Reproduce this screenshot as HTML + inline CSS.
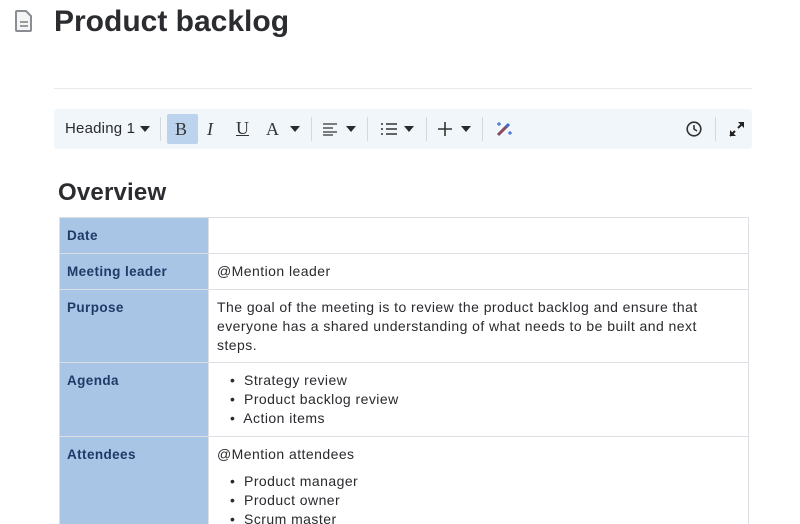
<!DOCTYPE html>
<html><head><meta charset="utf-8"><style>
*{box-sizing:border-box;margin:0;padding:0}
html,body{width:800px;height:524px;overflow:hidden}
body{background:#fff;font-family:"Liberation Sans",sans-serif;color:#292a2e;position:relative}
.a{position:absolute;white-space:nowrap}
.t{font-size:14px;line-height:19px;color:#292a2e;letter-spacing:0.45px}
.lbl{font-size:13.5px;font-weight:bold;color:#1e3a66;letter-spacing:0.4px}
.sep{position:absolute;top:117px;width:1px;height:24px;background:#d5d9de}
.cell{position:absolute;border:1px solid #dcdfe4}
</style></head><body>
<svg class="a" style="left:14px;top:9px" width="20" height="24" viewBox="0 0 20 24"><path d="M3 2h9l5 5v14a1 1 0 0 1-1 1H3a1 1 0 0 1-1-1V3a1 1 0 0 1 1-1z" fill="#f4f4f5" stroke="#8a8d93" stroke-width="2"/><path d="M6 13h8M6 17h8" stroke="#8a8d93" stroke-width="1.8"/></svg>
<div class="a" style="left:54px;top:4px;font-size:30px;font-weight:bold;line-height:36px;color:#2b2c30">Product backlog</div>
<div class="a" style="left:54px;top:88px;width:698px;height:1px;background:#e8eaed"></div>
<div class="a" style="left:54px;top:109px;width:698px;height:40px;background:#f1f6fb;border-radius:3px"></div>
<div class="a" style="left:65px;top:120px;font-size:15px;color:#292a2e;letter-spacing:0.2px">Heading 1</div>
<svg class="a" style="left:140px;top:126px" width="10" height="6"><path d="M0 0h10L5 6z" fill="#292a2e"/></svg>
<div class="sep" style="left:160px"></div>
<div class="a" style="left:167px;top:114px;width:31px;height:30px;background:#bcd3ee;border-radius:2px"></div>
<div class="a" style="left:175px;top:119px;font-family:'Liberation Serif',serif;font-size:18px;color:#333">B</div>
<div class="a" style="left:207px;top:119px;font-family:'Liberation Serif',serif;font-size:18px;font-style:italic;color:#333">I</div>
<div class="a" style="left:236px;top:118px;font-family:'Liberation Serif',serif;font-size:18px;text-decoration:underline;color:#333">U</div>
<div class="a" style="left:266px;top:119px;font-family:'Liberation Serif',serif;font-size:18px;color:#333">A</div>
<svg class="a" style="left:290px;top:126px" width="10" height="6"><path d="M0 0h10L5 6z" fill="#292a2e"/></svg>
<div class="sep" style="left:311px"></div>
<svg class="a" style="left:323px;top:122px" width="14" height="14"><path d="M0 2h14M0 6h10M0 10h14M0 13h10" stroke="#333" stroke-width="1.3"/></svg>
<svg class="a" style="left:346px;top:126px" width="10" height="6"><path d="M0 0h10L5 6z" fill="#292a2e"/></svg>
<div class="sep" style="left:367px"></div>
<svg class="a" style="left:381px;top:122px" width="16" height="14"><path d="M0 2h2M0 7h2M0 12h2M5 2h11M5 7h11M5 12h11" stroke="#333" stroke-width="1.4"/></svg>
<svg class="a" style="left:404px;top:126px" width="10" height="6"><path d="M0 0h10L5 6z" fill="#292a2e"/></svg>
<div class="sep" style="left:426px"></div>
<svg class="a" style="left:438px;top:122px" width="14" height="14"><path d="M7 0v14M0 7h14" stroke="#333" stroke-width="1.6"/></svg>
<svg class="a" style="left:461px;top:126px" width="10" height="6"><path d="M0 0h10L5 6z" fill="#292a2e"/></svg>
<div class="sep" style="left:482px"></div>
<svg class="a" style="left:495px;top:120px" width="18" height="18"><path d="M3 15L13 5" stroke="#8a4a5e" stroke-width="3"/><path d="M11 7l3-3" stroke="#3c6fd1" stroke-width="3"/><path d="M4 2v4M2 4h4M15 11v4M13 13h4" stroke="#3c6fd1" stroke-width="1.2"/></svg>
<svg class="a" style="left:686px;top:121px" width="16" height="16"><circle cx="8" cy="8" r="6.8" fill="none" stroke="#333" stroke-width="1.6"/><path d="M8 4v4l3 2" fill="none" stroke="#333" stroke-width="1.6"/></svg>
<div class="sep" style="left:715px"></div>
<svg class="a" style="left:729px;top:121px" width="16" height="16"><path d="M9 7l5-5M1 15l5-5" stroke="#222" stroke-width="2"/><path d="M9 1h6v6zM1 9v6h6z" fill="#222"/></svg>
<div class="a" style="left:58px;top:179px;font-size:24px;font-weight:bold;line-height:28px;color:#2b2c30;letter-spacing:0.2px">Overview</div>
<div class="a" style="left:59px;top:217px;width:150px;height:307px;background:#a8c5e6"></div>
<div class="cell" style="left:59px;top:217px;width:690px;height:37px"></div>
<div class="cell" style="left:59px;top:253px;width:690px;height:37px"></div>
<div class="cell" style="left:59px;top:289px;width:690px;height:74px"></div>
<div class="cell" style="left:59px;top:362px;width:690px;height:75px"></div>
<div class="cell" style="left:59px;top:436px;width:690px;height:88px;border-bottom:none"></div>
<div class="a" style="left:208px;top:217px;width:1px;height:307px;background:#dcdfe4"></div>
<div class="a lbl" style="left:67px;top:228px">Date</div>
<div class="a lbl" style="left:67px;top:264px">Meeting leader</div>
<div class="a lbl" style="left:67px;top:300px">Purpose</div>
<div class="a lbl" style="left:67px;top:373px">Agenda</div>
<div class="a lbl" style="left:67px;top:447px">Attendees</div>
<div class="a t" style="left:217px;top:262px">@Mention leader</div>
<div class="a t" style="left:217px;top:298px">The goal of the meeting is to review the product backlog and ensure that<br>everyone has a shared understanding of what needs to be built and next<br>steps.</div>
<div class="a t" style="left:230px;top:371px">•&nbsp; Strategy review<br>•&nbsp; Product backlog review<br>•&nbsp; Action items</div>
<div class="a t" style="left:217px;top:445px">@Mention attendees</div>
<div class="a t" style="left:230px;top:472px;height:52px;overflow:hidden">•&nbsp; Product manager<br>•&nbsp; Product owner<br>•&nbsp; Scrum master</div>
</body></html>
